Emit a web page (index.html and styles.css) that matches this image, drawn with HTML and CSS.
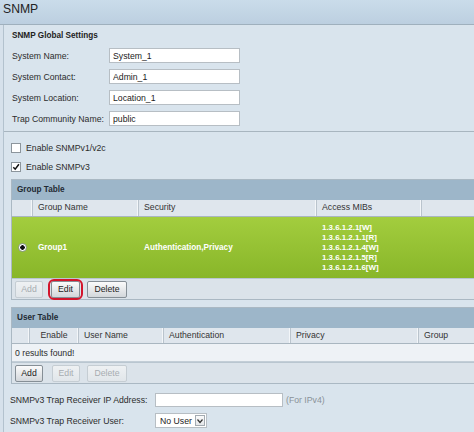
FILE: index.html
```html
<!DOCTYPE html>
<html>
<head>
<meta charset="utf-8">
<title>SNMP</title>
<link rel="stylesheet" href="styles.css">
</head>
<body>
<div class="title">SNMP</div>
<div class="main">
  <section class="global">
    <h2>SNMP Global Settings</h2>
    <div class="row"><label>System Name:</label><input class="txt" value="System_1"></div>
    <div class="row"><label>System Contact:</label><input class="txt" value="Admin_1"></div>
    <div class="row"><label>System Location:</label><input class="txt" value="Location_1"></div>
    <div class="row"><label>Trap Community Name:</label><input class="txt" value="public"></div>
  </section>

  <div class="checks">
    <div class="chk"><span class="box"></span>Enable SNMPv1/v2c</div>
    <div class="chk"><span class="box"><svg viewBox="0 0 8 8" width="8" height="8"><path d="M1.3 4.2 L3.2 6.2 L6.9 1.2" fill="none" stroke="#111" stroke-width="1.5"/></svg></span>Enable SNMPv3</div>
  </div>

  <div class="tbl group">
    <div class="thead">Group Table</div>
    <div class="cols gcols">
      <div></div>
      <div>Group Name</div>
      <div>Security</div>
      <div>Access MIBs</div>
      <div class="last"></div>
    </div>
    <div class="grow gcols">
      <div class="rcell"><span class="radio"></span></div>
      <div class="pad">Group1</div>
      <div class="pad">Authentication,Privacy</div>
      <div class="pad mibs">1.3.6.1.2.1[W]<br>1.3.6.1.2.1.1[R]<br>1.3.6.1.2.1.4[W]<br>1.3.6.1.2.1.5[R]<br>1.3.6.1.2.1.6[W]</div>
      <div></div>
    </div>
    <div class="btns">
      <span class="btn dis w-add">Add</span>
      <span class="btn w-edit hl">Edit</span>
      <span class="btn w-del">Delete</span>
    </div>
  </div>

  <div class="tbl user">
    <div class="thead">User Table</div>
    <div class="cols ucols">
      <div></div>
      <div class="center">Enable</div>
      <div>User Name</div>
      <div>Authentication</div>
      <div>Privacy</div>
      <div class="last">Group</div>
    </div>
    <div class="results">0 results found!</div>
    <div class="btns">
      <span class="btn w-add2">Add</span>
      <span class="btn dis w-edit2">Edit</span>
      <span class="btn dis w-del">Delete</span>
    </div>
  </div>

  <div class="trap">
    <div class="trow"><label>SNMPv3 Trap Receiver IP Address:</label><input class="txt tin" value=""><span class="note">(For IPv4)</span></div>
    <div class="trow"><label>SNMPv3 Trap Receiver User:</label>
      <div class="sel"><span class="seltext">No User</span><span class="arrow"><svg viewBox="0 0 8 8" width="8" height="8"><path d="M1.5 2.5 L4 5.5 L6.5 2.5" fill="none" stroke="#333" stroke-width="1.2"/></svg></span></div>
    </div>
  </div>
</div>
</body>
</html>
```

FILE: styles.css
```css
html, body {
  margin: 0;
  padding: 0;
}
body {
  width: 474px;
  height: 432px;
  overflow: hidden;
  background: #d6e1eb;
  font-family: "Liberation Sans", Arial, sans-serif;
  font-size: 8.7px;
  color: #2c2c2c;
}
.title {
  height: 24px;
  line-height: 19px;
  border-bottom: 1px solid #9fb0bd;
  background: linear-gradient(#cadcea, #bccfe0);
  font-size: 12.2px;
  padding-left: 3px;
  color: #232323;
}
.main {
  margin-left: 3px;
  border-left: 1px solid #b3c2ce;
  background: #d9e4ed;
  height: 407px;
  overflow: hidden;
}
.global {
  padding: 4px 0 2px 8px;
  border-bottom: 1px solid #a8b5bf;
}
.global h2 {
  margin: 0 0 2px;
  font-size: 8.2px;
  font-weight: bold;
  line-height: 14px;
  color: #222;
}
.row {
  display: flex;
  align-items: center;
  height: 21px;
}
.row label {
  width: 97px;
}
.txt {
  box-sizing: border-box;
  width: 131px;
  height: 15px;
  margin: 0;
  padding: 0 3px;
  border: 1px solid #b7bec4;
  background: #fff;
  font: inherit;
  color: #222;
  outline: none;
}
.checks {
  padding: 6px 0 0 7px;
  margin-bottom: 3px;
}
.chk {
  display: flex;
  align-items: center;
  height: 19px;
}
.box {
  width: 8px;
  height: 8px;
  border: 1px solid #8c959c;
  background: #fff;
  margin-right: 5px;
  display: flex;
}
.tbl {
  margin: 0 -20px 0 7px;
  border: 1px solid #aab8c3;
}
.user {
  margin-top: 7px;
}
.thead {
  height: 20px;
  line-height: 20px;
  background: #9db6c9;
  font-weight: bold;
  font-size: 8.2px;
  padding-left: 5px;
  color: #1f2a33;
}
.cols {
  display: grid;
  background: #dfe6ed;
  border-bottom: 1px solid #a9b6c0;
  color: #333;
}
.gcols {
  display: grid;
  grid-template-columns: 21px 106px 178px 105px 1fr;
}
.ucols {
  display: grid;
  grid-template-columns: 18px 49px 85px 127px 128px 1fr;
}
.group .cols {
  height: 17px;
  box-sizing: border-box;
}
.user .cols {
  height: 16px;
  box-sizing: border-box;
}
.cols > div {
  border-right: 1px solid #bac4cd;
  box-shadow: inset -1px 0 0 #f3f6f9;
  padding-left: 5px;
  line-height: 15px;
}
.cols > div.last {
  border-right: none;
  box-shadow: none;
}
.cols > div.center {
  text-align: center;
  padding-left: 0;
}
.grow {
  height: 61px;
  box-sizing: border-box;
  background: linear-gradient(#a3cd3e, #88b629);
  color: #fff;
  font-weight: bold;
  font-size: 8.2px;
  align-items: center;
}
.pad {
  padding-left: 5px;
}
.mibs {
  line-height: 10px;
  font-size: 7.9px;
}
.rcell {
  display: flex;
  justify-content: center;
}
.radio {
  width: 9px;
  height: 9px;
  box-sizing: border-box;
  border-radius: 50%;
  background: radial-gradient(circle, #111 0 2px, #fff 2.5px);
  border: 1px solid #8a9a8a;
}
.btns {
  height: 21px;
  display: flex;
  align-items: center;
  gap: 7px;
  padding-left: 3px;
  background: #dbe3ea;
  border-top: 1px solid #b9c6d0;
  box-sizing: border-box;
}
.btn {
  box-sizing: border-box;
  height: 17px;
  border: 1px solid #868f96;
  border-radius: 2px;
  background: linear-gradient(#fbfbfb, #d3d7db);
  display: flex;
  align-items: center;
  justify-content: center;
  color: #222;
}
.btn.dis {
  color: #a7acb0;
  border-color: #c5cdd3;
  background: linear-gradient(#eef1f3, #e1e6ea);
}
.w-add { width: 28px; }
.w-edit { width: 29px; margin-left: 1px; }
.w-del { width: 40px; }
.w-add2 { width: 28px; }
.w-edit2 { width: 28px; margin-left: 2px; }
.hl {
  position: relative;
}
.hl::after {
  content: "";
  position: absolute;
  left: -4px;
  right: -4px;
  top: -3px;
  bottom: -3px;
  border: 2px solid #d3152c;
  border-radius: 6px;
}
.results {
  height: 18px;
  line-height: 18px;
  padding-left: 3px;
  background: #eef2f6;
  border-bottom: 1px solid #c3ced7;
  box-sizing: border-box;
}
.trap {
  padding: 5px 0 0 6px;
}
.trow {
  display: flex;
  align-items: center;
  height: 21px;
}
.trow label {
  width: 145px;
}
.tin {
  width: 128px;
  height: 14px;
}
.note {
  margin-left: 3px;
  color: #8a9298;
}
.sel {
  box-sizing: border-box;
  width: 52px;
  height: 15px;
  border: 1px solid #b7bec4;
  background: #fff;
  display: flex;
  align-items: center;
  justify-content: space-between;
  padding: 0 1px 0 4px;
  color: #222;
}
.arrow {
  box-sizing: border-box;
  width: 10px;
  height: 11px;
  border: 1px solid #a3abb2;
  background: linear-gradient(#fafafa, #e4e7ea);
  display: flex;
  align-items: center;
  justify-content: center;
}
```
